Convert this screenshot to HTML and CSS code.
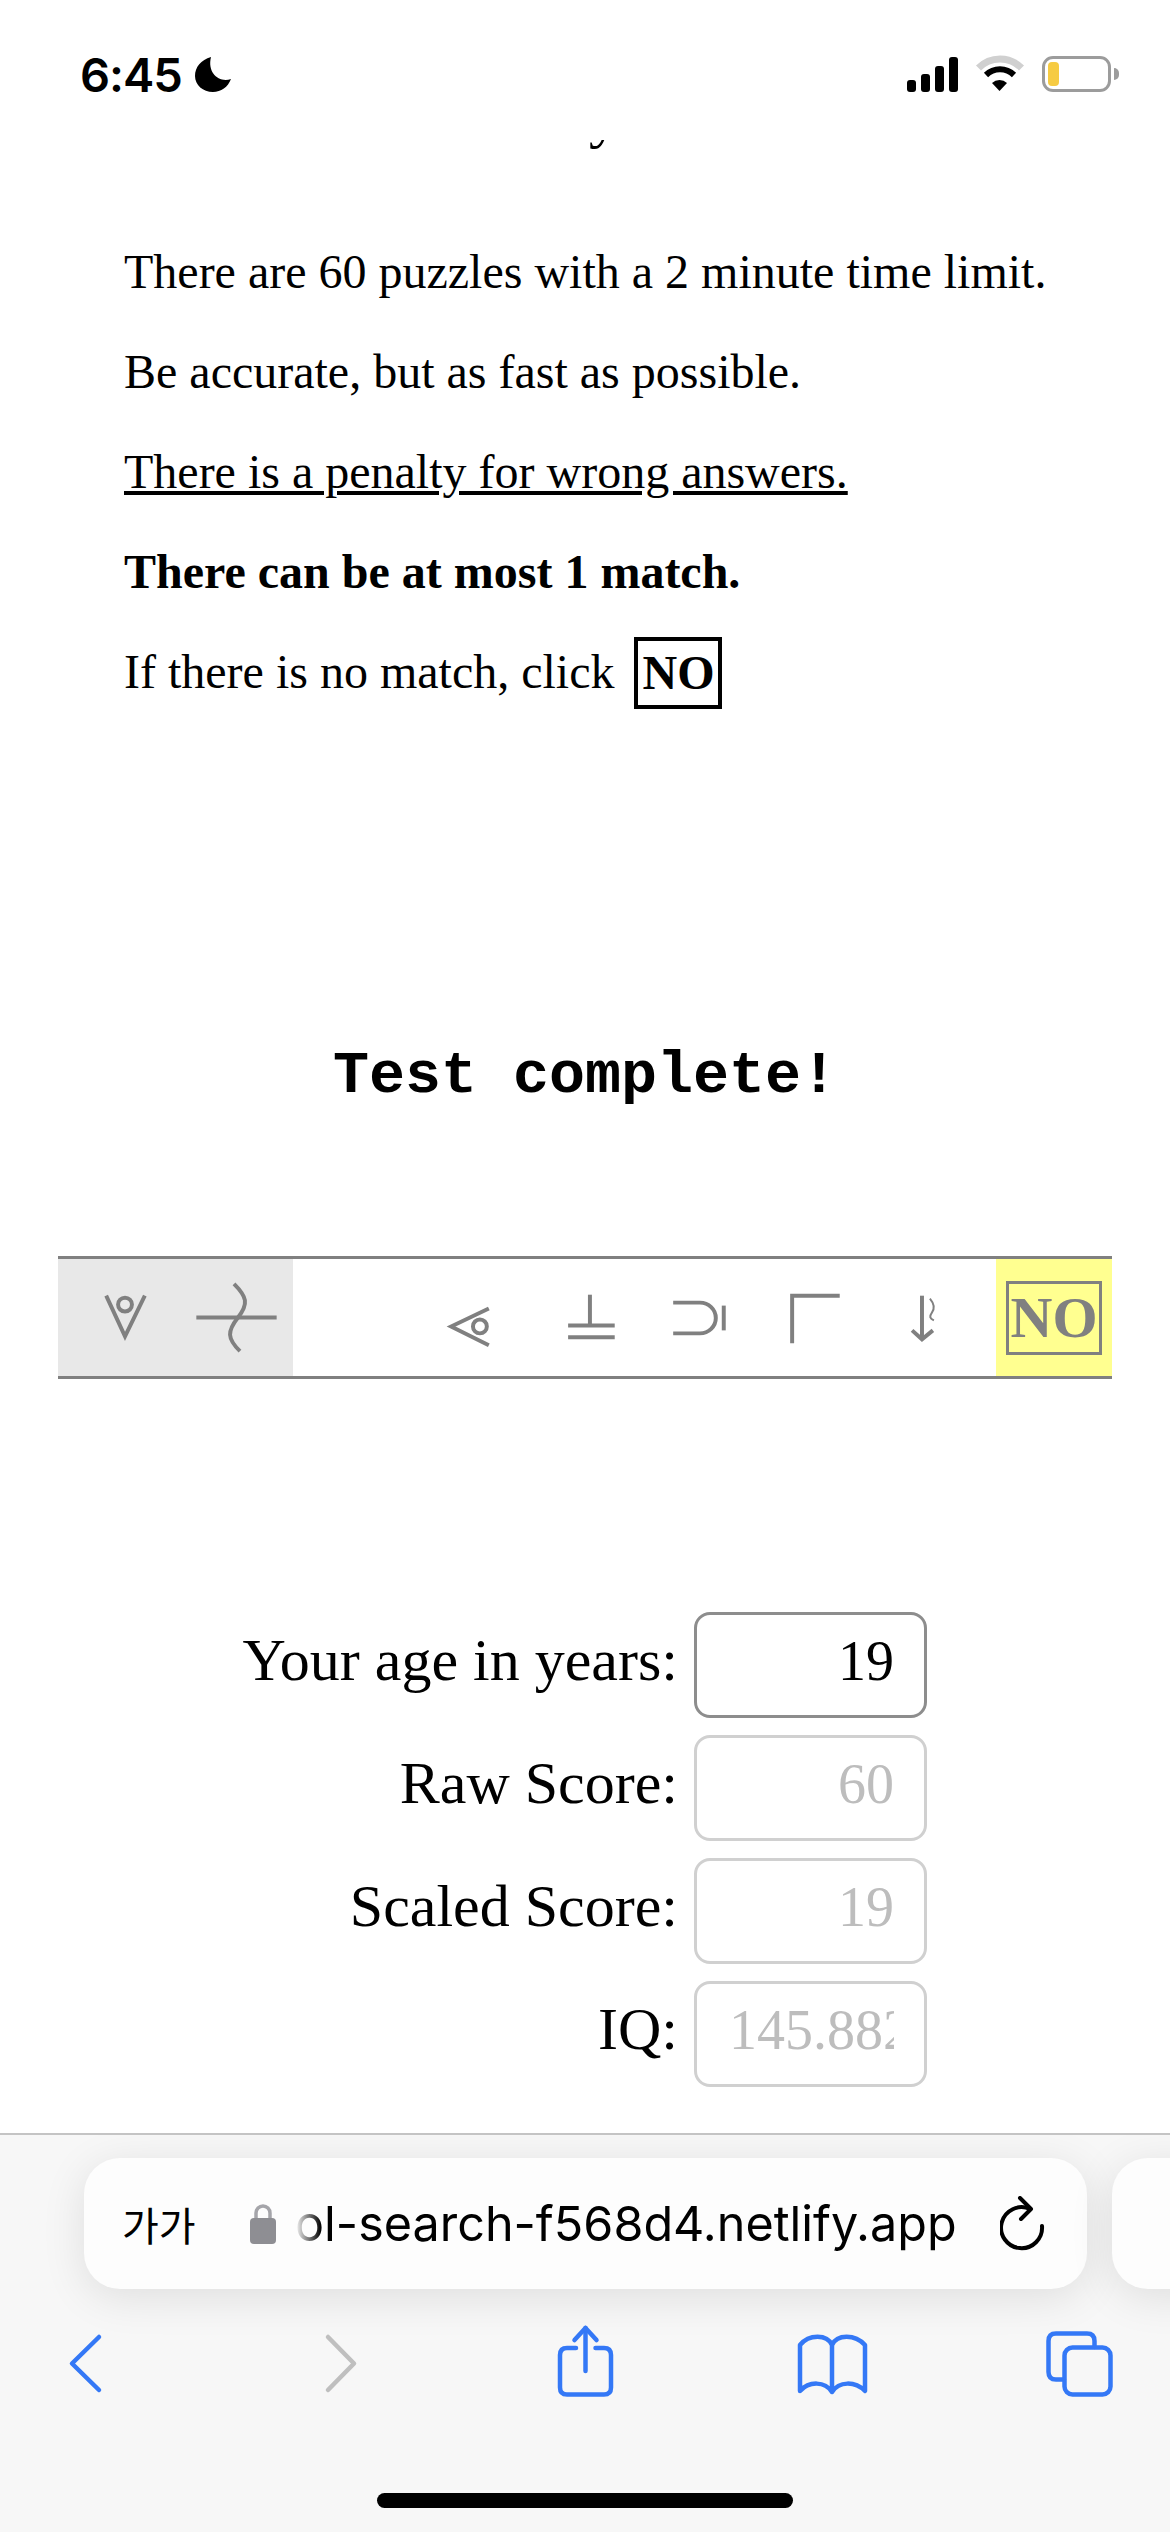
FILE: index.html
```html
<!DOCTYPE html>
<html lang="en">
<head>
    <meta charset="UTF-8">
    <meta name="viewport" content="width=device-width, initial-scale=1.0">
    <title>Symbol Search</title>
    <link rel="stylesheet" href="styles.css">
</head>
<body>

<!-- Status bar -->
<div class="status-bar">
    <div class="status-left">
        <span class="time">6:45</span>
        <svg class="moon" width="36" height="36" viewBox="0 0 36 36"><path d="M16 0C6 3 0 10 0 19c0 9 8 16 18 16 8 0 15-5 18-13C24 26 12 16 16 0z"/></svg>
    </div>
    <div class="status-right">
        <div class="signal">
            <span class="bar bar-1"></span>
            <span class="bar bar-2"></span>
            <span class="bar bar-3"></span>
            <span class="bar bar-4"></span>
        </div>
        <svg class="wifi" width="50" height="36" viewBox="0 0 50 36">
            <path d="M3.500 13A30 30 0 0 1 46.500 13" fill="none" stroke="#d0d0d0" stroke-width="7"/>
            <path d="M11 20A20 20 0 0 1 39 20" fill="none" stroke="#000" stroke-width="6"/>
            <path d="M24.500 36L17 28A11 11 0 0 1 32 28z"/>
        </svg>
        <div class="battery"><span class="battery-level"></span></div>
        <span class="battery-nub"></span>
    </div>
</div>

<div class="cut-line"><span>y</span></div>

<div class="intro">
    <p>There are 60 puzzles with a 2 minute time limit.</p>
    <p>Be accurate, but as fast as possible.</p>
    <p class="underlined">There is a penalty for wrong answers.</p>
    <p class="strong">There can be at most 1 match.</p>
    <p>If there is no match, click <span class="no-key">NO</span></p>
</div>

<h2 class="done">Test complete!</h2>

<!-- Last puzzle, greyed out -->
<div class="strip">
    <div class="targets">
        <svg class="sym" viewBox="0 0 110 118"><path d="M35 37L54 78L74 37"/><circle cx="54" cy="46" r="7"/></svg>
        <svg class="sym" viewBox="0 0 110 118"><path d="M15 59H96"/><path d="M53 25C66 38 68 45 57 59C46 73 46 80 59 93"/></svg>
    </div>
    <div class="choices">
        <svg class="sym-choice" viewBox="0 0 113 118"><path d="M77 50L39 68L77 87"/><circle cx="68" cy="68" r="7"/></svg>
        <svg class="sym-choice" viewBox="0 0 113 118"><path d="M65 36V67"/><path d="M43 67H90"/><path d="M43 79H90"/></svg>
        <svg class="sym-choice" viewBox="0 0 113 118"><path d="M35 44H62A16 15.500 0 0 1 62 75H35"/><path d="M86 47V72"/></svg>
        <svg class="sym-choice" viewBox="0 0 113 118"><path d="M41 85V37H89"/></svg>
        <svg class="sym-choice" viewBox="0 0 113 118"><path d="M58 37V80"/><path d="M48 72L58 81L69 72"/><path class="thin" d="M66 40C71 46 71 50 68 54C65 58 66 60 70 62"/></svg>
    </div>
    <div class="no-cell"><span class="no-key no-key-grey">NO</span></div>
</div>

<form class="score-form">
    <label for="age">Your age in years:</label>
    <input id="age" class="field field-active" type="text" value="19">
    <label for="raw">Raw Score:</label>
    <input id="raw" class="field" type="text" value="60" disabled>
    <label for="scaled">Scaled Score:</label>
    <input id="scaled" class="field" type="text" value="19" disabled>
    <label for="iq">IQ:</label>
    <input id="iq" class="field" type="text" value="145.88235" disabled>
</form>

<!-- Safari toolbar -->
<div class="browser-bar">
    <div class="tabs-row">
        <div class="url-pill">
            <span class="aa">가가</span>
            <svg class="lock" width="26" height="40" viewBox="0 0 26 40">
                <path d="M6 16V9a7 7 0 0 1 14 0v7" fill="none" stroke="#a5a5aa" stroke-width="3.500"/>
                <rect x="0" y="14" width="26" height="26" rx="4" fill="#8e8e93"/>
            </svg>
            <span class="url">ol-search-f568d4.netlify.app</span>
            <svg class="reload" width="46" height="56" viewBox="0 0 46 56">
                <path d="M30 13A20.500 20.500 0 1 0 42 30" fill="none" stroke="#000" stroke-width="4" stroke-linecap="round"/>
                <path d="M20 2L31 13L21 23" fill="none" stroke="#000" stroke-width="4" stroke-linecap="round" stroke-linejoin="round"/>
            </svg>
        </div>
        <div class="next-pill"></div>
    </div>
    <div class="toolbar">
        <svg class="tool" viewBox="0 0 60 72"><path d="M44 11L17 37.500L44 64"/></svg>
        <svg class="tool tool-off" viewBox="0 0 60 72"><path d="M24 11L50 37.500L24 64"/></svg>
        <svg class="tool" viewBox="0 0 60 72"><path d="M23 22H14Q7 22 7 29V61.500Q7 68.500 14 68.500H51Q58 68.500 58 61.500V29Q58 22 51 22H42.500"/><path d="M32.500 45V2"/><path d="M21.500 14L32.500 2L43.500 14"/></svg>
        <svg class="tool" viewBox="0 0 60 72"><path d="M31 19C26 8 8 8 -1 19V65C8 55 24 55 31 66C38 55 54 55 64 65V19C54 8 36 8 31 19V66"/></svg>
        <svg class="tool" viewBox="0 0 60 72"><path d="M44.500 21V15Q44.500 7.500 37 7.500H6Q-1.500 7.500 -1.500 15V46Q-1.500 53.500 6 53.500H14"/><rect x="14.500" y="21.500" width="46" height="47" rx="8"/></svg>
    </div>
    <div class="home-indicator"></div>
</div>

</body>
</html>
```

FILE: styles.css
```css
body { margin: 0; width: 1170px; height: 2532px; overflow: hidden; background-color: white; display: flex; flex-direction: column; font-family: "Liberation Serif", serif; color: black; }

.status-bar { height: 130px; flex: none; display: flex; justify-content: space-between; padding: 55px 51px 0 80px; box-sizing: border-box; }
.status-left { display: flex; align-items: flex-start; gap: 13px; height: 40px; }
.time { font-family: Inter, sans-serif; font-weight: 600; font-size: 47px; line-height: 40px; letter-spacing: -1px; }
.moon { margin-top: 2px; }
.status-right { display: flex; align-items: flex-start; }
.signal { display: flex; align-items: flex-end; gap: 5px; height: 35px; margin-top: 2px; }
.bar { width: 9px; background-color: black; border-radius: 3px; }
.bar-1 { height: 12px; }
.bar-2 { height: 18px; }
.bar-3 { height: 26px; }
.bar-4 { height: 35px; }
.wifi { margin: 0 17px 0 17px; }
.battery { width: 69px; height: 36px; box-sizing: border-box; margin-top: 1px; border: 3px solid #9c9c9c; border-radius: 11px; padding: 3px; }
.battery-level { display: block; width: 11px; height: 24px; background-color: #f6cb42; border-radius: 4px; }
.battery-nub { width: 5px; height: 12px; margin: 13px 0 0 3px; background-color: #9c9c9c; border-radius: 0 6px 6px 0; }

/* heading scrolled under the status bar, only the tail of the y is left */
.cut-line { height: 10px; flex: none; margin-top: 10px; overflow: hidden; text-align: center; padding-left: 38px; box-sizing: border-box; font-size: 60px; line-height: 60px; }
.cut-line span { display: block; margin-top: -54px; }

.intro { flex: none; padding: 72px 0 0 124px; }
.intro p { margin: 0; height: 100px; font-size: 48px; line-height: 100px; }
.underlined { text-decoration: underline; }
.strong { font-weight: bold; }
.no-key { display: inline-block; border: 4px solid black; padding: 0 4px; margin: 0 0 7px 8px; font-weight: bold; line-height: 64px; vertical-align: middle; }

.done { flex: none; margin: 319px 0 0 0; text-align: center; font-family: "Liberation Mono", monospace; font-size: 60px; line-height: 70px; font-weight: bold; }

.strip { flex: none; display: flex; margin: 145px 58px 0 58px; height: 123px; box-sizing: border-box; border-top: 3px solid #808080; border-bottom: 3px solid #808080; }
.targets { width: 235px; flex: none; display: flex; padding-left: 13px; box-sizing: border-box; background-color: #e8e8e8; }
.choices { flex: 1; display: flex; justify-content: flex-end; padding-right: 19px; }
.sym { width: 110px; height: 117px; }
.sym-choice { width: 113px; height: 117px; }
.sym path, .sym circle, .sym-choice path, .sym-choice circle { fill: none; stroke: #808080; stroke-width: 4; }
.sym-choice .thin { stroke-width: 2; }
.no-cell { width: 116px; flex: none; display: flex; align-items: center; justify-content: center; background-color: #ffff90; }
.no-key-grey { margin: 0; width: 96px; height: 74px; box-sizing: border-box; border: 3px solid #808080; padding: 0; color: #808080; font-size: 58px; line-height: 68px; text-align: center; }

.score-form { flex: none; display: grid; grid-template-columns: 678px 233px; column-gap: 16px; row-gap: 17px; margin-top: 233px; font-size: 60px; }
.score-form label { text-align: right; line-height: 96px; }
.field { width: 233px; height: 106px; box-sizing: border-box; border: 3px solid #d0d0d0; border-radius: 16px; padding: 0 30px 8px 32px; background-color: white; font-family: "Liberation Serif", serif; font-size: 56px; text-align: right; color: #bdbdbd; -webkit-text-fill-color: #bdbdbd; opacity: 1; outline: none; }
.field-active { border-color: #8d8d8d; color: black; -webkit-text-fill-color: black; }

.browser-bar { margin-top: auto; height: 399px; flex: none; box-sizing: border-box; border-top: 2px solid #c4c4c4; background-color: #f7f7f7; overflow: hidden; position: relative; }
.tabs-row { display: flex; gap: 25px; padding: 23px 0 0 84px; }
.url-pill { width: 1003px; height: 131px; flex: none; box-sizing: border-box; padding: 0 41px 0 38px; display: flex; align-items: center; background-color: #fdfdfd; border-radius: 36px; box-shadow: 0 8px 44px rgba(0, 0, 0, 0.1); }
.next-pill { width: 200px; height: 131px; flex: none; background-color: #fdfdfd; border-radius: 36px; box-shadow: 0 8px 44px rgba(0, 0, 0, 0.1); }
.aa { font-family: "Noto Sans CJK KR", sans-serif; font-size: 40px; line-height: 50px; width: 128px; flex: none; }
.lock { flex: none; margin-right: 19px; }
.url { font-family: Inter, sans-serif; font-size: 48.500px; line-height: 60px; flex: 1; white-space: nowrap; -webkit-mask-image: linear-gradient(to right, transparent 0, black 26px); mask-image: linear-gradient(to right, transparent 0, black 26px); }
.reload { flex: none; }

.toolbar { display: flex; justify-content: space-between; padding: 37px 60px 0 55px; }
.tool { width: 60px; height: 72px; overflow: visible; }
.tool path, .tool rect { fill: none; stroke: #3478f6; stroke-width: 4.500; stroke-linecap: round; stroke-linejoin: round; }
.tool-off path { stroke: #bfbfbf; }

.home-indicator { position: absolute; left: 377px; bottom: 24px; width: 416px; height: 15px; background-color: black; border-radius: 8px; }
```
